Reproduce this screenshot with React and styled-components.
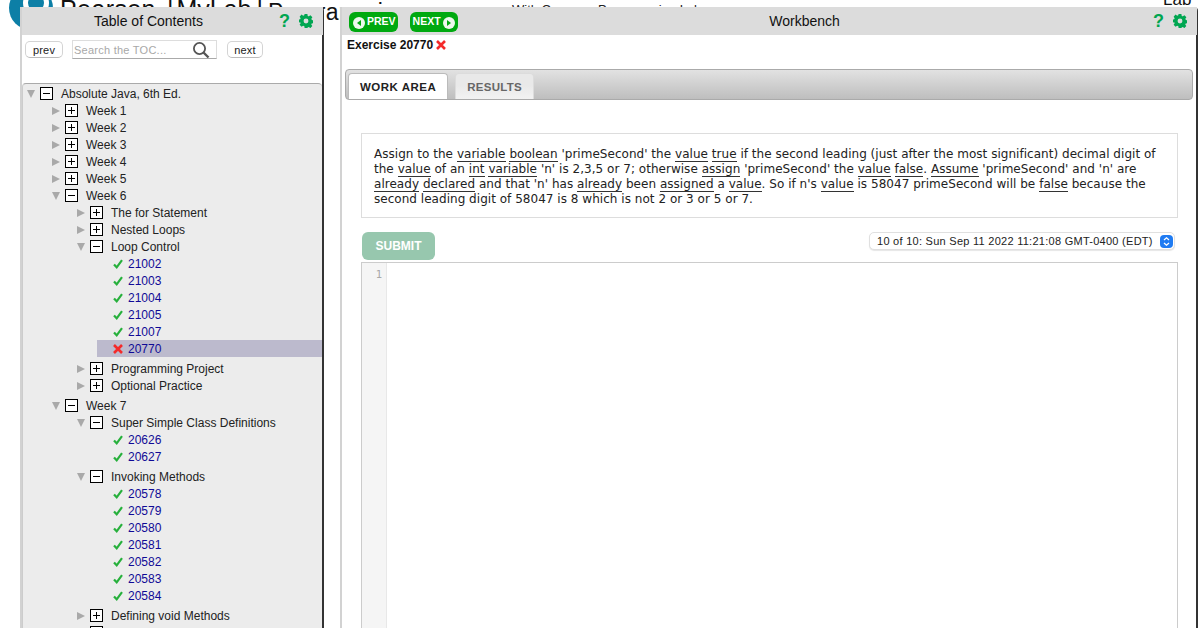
import React from "react";
import styled, { createGlobalStyle } from "styled-components";

const Global = createGlobalStyle`
  html, body { margin: 0; padding: 0; height: 628px; overflow: hidden; background: #fff; }
  body { font-family: "Liberation Sans", Arial, sans-serif; color: #222; }
  * { box-sizing: border-box; }
`;

const Page = styled.div`
  position: relative;
  width: 1201px;
  height: 628px;
  overflow: hidden;
`;
const Backdrop = styled.div`
  position: absolute;
  inset: 0;
  height: 40px;
  overflow: hidden;
`;
const LogoDisc = styled.div`
  position: absolute;
  left: 9px;
  top: -14px;
  width: 44px;
  height: 44px;
  border-radius: 50%;
  background: #0d7fa6;
  &::after {
    content: "";
    position: absolute;
    left: 14px;
    top: 4px;
    width: 16px;
    height: 16px;
    border-radius: 50%;
    border: 5px solid #fff;
  }
`;
const BackTitle = styled.div`
  position: absolute;
  left: 60px;
  top: -6px;
  display: flex;
  align-items: baseline;
  font-size: 25px;
  line-height: 30px;
  white-space: nowrap;
  color: #111;
`;
const BackPart = styled.span`
  margin-left: ${(p) => p.$ml || 0}px;
  letter-spacing: ${(p) => p.$ls || 0}px;
`;
const BackProgram = styled.span`
  margin-left: 5px;
  font-size: 23px;
  letter-spacing: 0.3px;
  transform: translateY(2px);
`;
const BackLab = styled.div`
  position: absolute;
  left: 1163px;
  top: -10px;
  font-size: 17px;
  line-height: 20px;
  color: #111;
`;
const BackMid = styled.div`
  position: absolute;
  left: 512px;
  top: 3px;
  font-size: 13px;
  line-height: 14px;
  white-space: nowrap;
  color: #222;
`;

const Desk = styled.div`
  position: relative;
  display: flex;
  gap: 16px;
  padding: 7px 3px 0 20px;
  height: 628px;
`;

const Panel = styled.section`
  width: ${(p) => p.$w}px;
  flex: none;
  height: 700px;
  background: #fff;
  border-left: 2px solid #d2d2d2;
  border-right: 2px solid #333;
  border-top-right-radius: 4px;
  display: flex;
  flex-direction: column;
`;
const PanelHead = styled.header`
  height: 28px;
  flex: none;
  background: #dcdcdc;
  display: flex;
  align-items: center;
  position: relative;
  margin-right: -1px;
`;
const HeadTitle = styled.div`
  font-size: 14px;
  color: #111;
  text-align: center;
  flex: 1;
  padding-right: ${(p) => p.$pad}px;
`;
const HeadIcons = styled.div`
  display: flex;
  align-items: center;
  gap: 9px;
  margin-right: 10px;
  margin-left: ${(p) => (p.$push ? "auto" : "0")};
  color: #00a651;
`;
const Question = styled.span`
  font-family: "Liberation Sans", sans-serif;
  font-weight: 700;
  font-size: 18px;
  line-height: 19px;
  color: #00a651;
`;

const Gear = () => (
  <svg width="14" height="14" viewBox="0 0 16 16" aria-hidden="true">
    <path
      fill="#00a651"
      fillRule="evenodd"
      d="M6.4 0h3.2l.4 2.2c.4.1.8.3 1.2.5l1.9-1.3 2.2 2.3-1.2 1.8c.2.4.4.8.5 1.3l2 .4v3.2l-2.1.4c-.1.4-.3.8-.5 1.2l1.2 1.8-2.2 2.3-1.9-1.3c-.4.2-.8.4-1.2.5L9.6 16H6.4L6 13.8c-.4-.1-.8-.3-1.2-.5l-1.9 1.3L.7 12.3l1.2-1.8c-.2-.4-.4-.8-.5-1.2L0 9.6V6.4l1.4-.3c.1-.5.3-.9.5-1.3L.7 3l2.2-2.3 1.9 1.3c.4-.2.8-.4 1.2-.5L6.4 0zM8 5.2a2.8 2.8 0 1 0 0 5.6 2.8 2.8 0 0 0 0-5.6z"
    />
  </svg>
);

const TocTools = styled.div`
  height: 48px;
  flex: none;
  display: flex;
  align-items: flex-start;
  padding: 6px 0 0 3px;
`;
const SmallBtn = styled.button`
  width: ${(p) => p.$w}px;
  height: 17px;
  padding: 0;
  margin-right: ${(p) => p.$mr || 0}px;
  background: #fff;
  border: 1px solid #d4d4d4;
  border-bottom-color: #bbb;
  border-radius: 5px;
  font-family: "Liberation Sans", sans-serif;
  font-size: 11px;
  line-height: 14px;
  letter-spacing: 0.2px;
  color: #222;
`;
const SearchBox = styled.div`
  width: 145px;
  height: 19px;
  margin: -1px 10px 0 0;
  border: 1px solid #ddd;
  border-bottom-color: #aaa;
  display: flex;
  align-items: center;
  justify-content: space-between;
  padding: 0 6px 0 1px;
  font-size: 11px;
  color: #a8a8a8;
  letter-spacing: 0.25px;
`;

const TreePane = styled.div`
  flex: 1;
  background: #ececec;
  border-top: 1px solid #aaa;
  border-left: 1px solid #ccc;
  border-top-left-radius: 4px;
  border-top-right-radius: 4px;
  padding-top: 1px;
`;
const Row = styled.div`
  height: 17px;
  display: flex;
  align-items: center;
  padding-left: ${(p) => p.$indent}px;
  font-size: 12px;
  color: #222;
  white-space: nowrap;
  margin-bottom: ${(p) => p.$after || 0}px;
`;
const Arrow = styled.span`
  width: 0;
  height: 0;
  flex: none;
  ${(p) =>
    p.$open
      ? `border-left: 4px solid transparent; border-right: 4px solid transparent; border-top: 8px solid #a9a9a9; margin: 0 5px 0 0;`
      : `border-top: 4px solid transparent; border-bottom: 4px solid transparent; border-left: 8px solid #a9a9a9; margin: 0 5px 0 0;`}
`;
const Toggle = styled.span`
  width: 13px;
  height: 13px;
  flex: none;
  background: #fff;
  border: 1px solid #000;
  position: relative;
  margin-right: 8px;
  &::before {
    content: "";
    position: absolute;
    left: 2px;
    right: 2px;
    top: 5px;
    height: 1px;
    background: #000;
  }
  &::after {
    content: "";
    display: ${(p) => (p.$open ? "none" : "block")};
    position: absolute;
    top: 2px;
    bottom: 2px;
    left: 5px;
    width: 1px;
    background: #000;
  }
`;
const Leaf = styled.div`
  height: 17px;
  display: flex;
  align-items: center;
  gap: 5px;
  padding-left: 16px;
  margin-left: ${(p) => p.$indent}px;
  font-size: 12px;
  color: #100a96;
  background: ${(p) => (p.$active ? "#bcbacd" : "transparent")};
  margin-bottom: ${(p) => p.$after || 0}px;
`;
const Check = () => (
  <svg width="10" height="10" viewBox="0 0 10 10" aria-hidden="true">
    <path d="M1 5.5 L3.7 8.3 L9 1.2" fill="none" stroke="#27b03c" strokeWidth="2.2" />
  </svg>
);
const Cross = ({ size = 10 }) => (
  <svg width={size} height={size} viewBox="0 0 10 10" aria-hidden="true">
    <path d="M1 1 L9 9 M9 1 L1 9" fill="none" stroke="#f42a2a" strokeWidth="2.6" />
  </svg>
);

const Branch = ({ indent, open, children, after }) => (
  <Row $indent={indent} $after={after}>
    <Arrow $open={open} />
    <Toggle $open={open} />
    {children}
  </Row>
);
const Exercise = ({ id, indent, bad, active, after }) => (
  <Leaf $indent={indent} $active={active} $after={after}>
    {bad ? <Cross /> : <Check />}
    {id}
  </Leaf>
);

const NavRow = styled.div`
  display: flex;
  gap: 12px;
  padding: 2px 0 0 7px;
  flex: none;
`;
const NavBtn = styled.div`
  height: 20px;
  padding: 0 ${(p) => (p.$next ? 3 : 2)}px 0 ${(p) => (p.$next ? 3 : 4)}px;
  border-radius: 6px;
  background: #00a910;
  display: flex;
  align-items: center;
  gap: 2px;
  color: #fff;
  font-weight: 700;
  font-size: 10.5px;
`;
const NavLabel = styled.span`
  padding-bottom: 3px;
`;
const NavDot = styled.span`
  width: 12px;
  height: 12px;
  border-radius: 50%;
  background: #eef8ee;
  display: flex;
  align-items: center;
  justify-content: center;
  margin-top: 1px;
  &::after {
    content: "";
    border-top: 3px solid transparent;
    border-bottom: 3px solid transparent;
    ${(p) => (p.$next ? "border-left: 4px solid #00a910;" : "border-right: 4px solid #00a910;")}
  }
`;
const WorkTitle = styled.div`
  position: absolute;
  left: 0;
  right: 0;
  text-align: center;
  font-size: 14px;
  color: #111;
  padding-left: 70px;
  pointer-events: none;
`;
const ExerciseLine = styled.div`
  display: flex;
  align-items: center;
  gap: 3px;
  height: 21px;
  padding: 0 0 2px 5px;
  font-size: 12px;
  font-weight: 700;
  color: #111;
  flex: none;
`;
const TabBar = styled.div`
  margin: 13px 3px 0 3px;
  height: 31px;
  flex: none;
  border: 1px solid #aaa;
  border-radius: 4px;
  background: linear-gradient(#e2e2e2, #bebebe);
  display: flex;
  align-items: flex-end;
  gap: 7px;
  padding-left: 2px;
`;
const Tab = styled.div`
  height: 26px;
  display: flex;
  align-items: center;
  padding: 0 11px;
  border-radius: 4px 4px 0 0;
  font-size: 11.5px;
  font-weight: 700;
  letter-spacing: ${(p) => (p.$active ? 0.5 : 0.25)}px;
  border: 1px solid ${(p) => (p.$active ? "#bbb" : "#dcdcdc")};
  border-bottom: none;
  background: ${(p) => (p.$active ? "#fff" : "linear-gradient(#e9e9e9, #e9e9e9 45%, #f2f2f2)")};
  color: ${(p) => (p.$active ? "#222" : "#666")};
`;
const Work = styled.div`
  flex: 1;
  padding: 33px 18px 0 19px;
  display: flex;
  flex-direction: column;
`;
const Prompt = styled.div`
  border: 1px solid #ddd;
  height: 85px;
  padding: 13px 12px;
  font-family: "DejaVu Sans", Verdana, sans-serif;
  font-size: 12px;
  line-height: 15px;
  letter-spacing: 0.03px;
  color: #222;
  white-space: nowrap;
`;
const Term = styled.span`
  border-bottom: 1px solid #333;
`;
const ActionRow = styled.div`
  display: flex;
  justify-content: space-between;
  align-items: flex-start;
  height: 44px;
  padding: 14px 3px 0 1px;
  flex: none;
`;
const Submit = styled.div`
  width: 73px;
  height: 28px;
  border-radius: 6px;
  background: #97c7ae;
  color: #fff;
  font-weight: 700;
  font-size: 12px;
  display: flex;
  align-items: center;
  justify-content: center;
`;
const VersionSelect = styled.div`
  width: 306px;
  height: 18px;
  border: 1px solid #e0e0e0;
  border-radius: 5px;
  background: #fff;
  display: flex;
  align-items: center;
  justify-content: space-between;
  padding: 0 1px 0 7px;
  font-size: 11px;
  letter-spacing: 0.27px;
  color: #222;
  white-space: nowrap;
  box-shadow: 0 1px 1px rgba(0, 0, 0, 0.1);
`;
const SelectCaret = styled.span`
  width: 13px;
  height: 13px;
  border-radius: 4px;
  background: #1f7bf2;
  display: flex;
  align-items: center;
  justify-content: center;
`;
const Editor = styled.div`
  flex: 1;
  border: 1px solid #ccc;
  border-bottom: none;
  display: flex;
`;
const Gutter = styled.div`
  width: 25px;
  background: #f5f5f5;
  border-right: 1px solid #e8e8e8;
  font-family: "DejaVu Sans Mono", monospace;
  font-size: 10.5px;
  color: #a8a8a8;
  text-align: right;
  padding: 5px 4px 0 0;
`;

const P = Term;

export default function App() {
  return (
    <Page>
      <Global />
      <Backdrop>
        <LogoDisc />
        <BackTitle>
          <BackPart $ls={0.4}>Pearson</BackPart>
          <BackPart $ml={11}>|</BackPart>
          <BackPart $ml={3}>MyLab</BackPart>
          <BackPart $ml={5}>|</BackPart>
          <BackProgram>Programming</BackProgram>
        </BackTitle>
        <BackMid>With Cengage Programming Lab</BackMid>
        <BackLab>Lab</BackLab>
      </Backdrop>
      <Desk>
        <Panel $w={304}>
          <PanelHead>
            <HeadTitle $pad={4}>Table of Contents</HeadTitle>
            <HeadIcons>
              <Question>?</Question>
              <Gear />
            </HeadIcons>
          </PanelHead>
          <TocTools>
            <SmallBtn $w={38} $mr={9}>prev</SmallBtn>
            <SearchBox>
              Search the TOC...
              <svg width="18" height="18" viewBox="0 0 18 18" aria-hidden="true">
                <circle cx="7.5" cy="7.5" r="5.6" fill="none" stroke="#555" strokeWidth="1.8" />
                <path d="M11.5 11.5 L16.5 16.5" stroke="#555" strokeWidth="2.4" />
              </svg>
            </SearchBox>
            <SmallBtn $w={36}>next</SmallBtn>
          </TocTools>
          <TreePane>
            <Branch indent={4} open>Absolute Java, 6th Ed.</Branch>
            {[1, 2, 3, 4, 5].map((w) => (
              <Branch key={w} indent={29}>Week {w}</Branch>
            ))}
            <Branch indent={29} open>Week 6</Branch>
            <Branch indent={54}>The for Statement</Branch>
            <Branch indent={54}>Nested Loops</Branch>
            <Branch indent={54} open>Loop Control</Branch>
            {["21002", "21003", "21004", "21005", "21007"].map((id) => (
              <Exercise key={id} id={id} indent={74} />
            ))}
            <Exercise id="20770" indent={74} bad active after={3} />
            <Branch indent={54}>Programming Project</Branch>
            <Branch indent={54} after={3}>Optional Practice</Branch>
            <Branch indent={29} open>Week 7</Branch>
            <Branch indent={54} open>Super Simple Class Definitions</Branch>
            <Exercise id="20626" indent={74} />
            <Exercise id="20627" indent={74} after={3} />
            <Branch indent={54} open>Invoking Methods</Branch>
            {["20578", "20579", "20580", "20581", "20582", "20583"].map((id) => (
              <Exercise key={id} id={id} indent={74} />
            ))}
            <Exercise id="20584" indent={74} after={3} />
            <Branch indent={54}>Defining void Methods</Branch>
            <Branch indent={54}>Writing Methods</Branch>
          </TreePane>
        </Panel>
        <Panel $w={858}>
          <PanelHead>
            <NavRow>
              <NavBtn>
                <NavDot />
                <NavLabel>PREV</NavLabel>
              </NavBtn>
              <NavBtn $next>
                <NavLabel>NEXT</NavLabel>
                <NavDot $next />
              </NavBtn>
            </NavRow>
            <WorkTitle>Workbench</WorkTitle>
            <HeadIcons $push>
              <Question>?</Question>
              <Gear />
            </HeadIcons>
          </PanelHead>
          <ExerciseLine>
            Exercise 20770
            <Cross />
          </ExerciseLine>
          <TabBar>
            <Tab $active>WORK AREA</Tab>
            <Tab>RESULTS</Tab>
          </TabBar>
          <Work>
            <Prompt>
              Assign to the <P>variable</P> <P>boolean</P> 'primeSecond' the <P>value</P> <P>true</P> if the second leading (just after the most significant) decimal digit of
              <br />
              the <P>value</P> of an <P>int</P> <P>variable</P> 'n' is 2,3,5 or 7; otherwise <P>assign</P> 'primeSecond' the <P>value</P> <P>false</P>. <P>Assume</P> 'primeSecond' and 'n' are
              <br />
              <P>already</P> <P>declared</P> and that 'n' has <P>already</P> been <P>assigned</P> a <P>value</P>. So if n's <P>value</P> is 58047 primeSecond will be <P>false</P> because the
              <br />
              second leading digit of 58047 is 8 which is not 2 or 3 or 5 or 7.
            </Prompt>
            <ActionRow>
              <Submit>SUBMIT</Submit>
              <VersionSelect>
                10 of 10: Sun Sep 11 2022 11:21:08 GMT-0400 (EDT)
                <SelectCaret>
                  <svg width="9" height="11" viewBox="0 0 9 11" aria-hidden="true">
                    <path d="M2 4 L4.5 1.8 L7 4 M2 7 L4.5 9.2 L7 7" fill="none" stroke="#fff" strokeWidth="1.3" />
                  </svg>
                </SelectCaret>
              </VersionSelect>
            </ActionRow>
            <Editor>
              <Gutter>1</Gutter>
            </Editor>
          </Work>
        </Panel>
      </Desk>
    </Page>
  );
}
